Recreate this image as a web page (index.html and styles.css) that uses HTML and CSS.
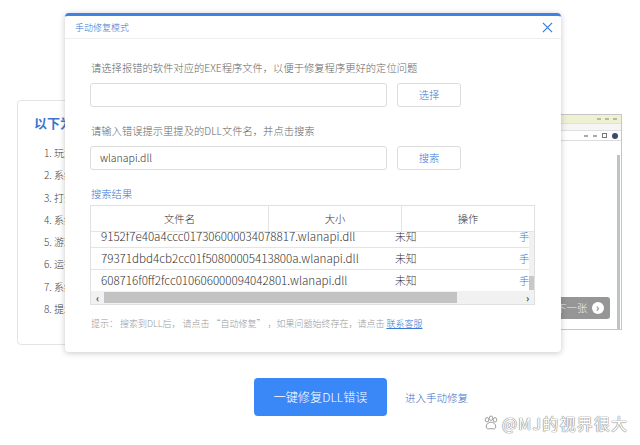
FILE: index.html
```html
<!DOCTYPE html>
<html lang="zh">
<head>
<meta charset="utf-8">
<link rel="stylesheet" href="styles.css">
</head>
<body>
<div class="page">
  <div class="stage">
    <div class="card">
      <h2 class="card-title">以下为常见的DLL报错原因</h2>
      <ol class="reasons">
        <li>1. 玩游戏或运行软件时提示找不到DLL文件</li>
        <li>2. 系统文件被误删除或损坏</li>
        <li>3. 打开程序提示缺少DLL文件</li>
        <li>4. 系统更新后DLL文件丢失</li>
        <li>5. 游戏运行库安装不完整</li>
        <li>6. 运行软件提示应用程序无法正常启动</li>
        <li>7. 系统中毒导致DLL文件被破坏</li>
        <li>8. 提示DLL文件版本不兼容</li>
      </ol>
    </div>
    <div class="shot">
      <div class="shot-title"><span class="wbtn"></span><span class="wbtn"></span><span class="wbtn"></span></div>
      <div class="shot-menu"></div>
      <div class="shot-tools"><span class="ti"></span><span class="ti"></span><span class="ti sq"></span><span class="ti dot"></span></div>
      <div class="shot-body"><div class="shot-scroll"></div></div>
      <div class="next">下一张 <span class="next-ico">›</span></div>
    </div>
  </div>

  <div class="actions">
    <button class="primary">一键修复DLL错误</button>
    <a class="manual">进入手动修复</a>
  </div>

  <div class="watermark">
    <svg class="paw" viewBox="0 0 20 20" width="16" height="16"><g fill="#fff" stroke="#9a9a9a" stroke-width="1.2"><ellipse cx="5" cy="6" rx="2.2" ry="2.8"/><ellipse cx="10" cy="4" rx="2.2" ry="2.8"/><ellipse cx="15" cy="6" rx="2.2" ry="2.8"/><path d="M4 15c0-4 3-6 6-6s6 2 6 6c0 2-2 3-6 2-4 1-6 0-6-2z"/></g></svg>
    <span>@MJ的视界很大</span>
  </div>

  <div class="modal">
    <div class="modal-head">
      <span class="modal-title">手动修复模式</span>
      <svg class="close" viewBox="0 0 12 12" width="11" height="11"><path d="M1 1L11 11M11 1L1 11" stroke="#3a7bd5" stroke-width="1.3" fill="none"/></svg>
    </div>
    <div class="modal-body">
      <p class="label">请选择报错的软件对应的EXE程序文件，以便于修复程序更好的定位问题</p>
      <div class="field-row">
        <div class="input"></div>
        <div class="btn">选择</div>
      </div>
      <p class="label gap">请输入错误提示里提及的DLL文件名，并点击搜索</p>
      <div class="field-row">
        <div class="input">wlanapi.dll</div>
        <div class="btn">搜索</div>
      </div>
      <p class="result-title">搜索结果</p>
      <div class="table">
        <div class="thead">
          <div class="th c1">文件名</div>
          <div class="th c2">大小</div>
          <div class="th c3">操作</div>
        </div>
        <div class="tbody">
          <div class="rows">
            <div class="tr"><span class="td n">9152f7e40a4ccc017306000034078817.wlanapi.dll</span><span class="td s">未知</span><span class="td a">手动</span></div>
            <div class="tr"><span class="td n">79371dbd4cb2cc01f50800005413800a.wlanapi.dll</span><span class="td s">未知</span><span class="td a">手动</span></div>
            <div class="tr"><span class="td n">608716f0ff2fcc010606000094042801.wlanapi.dll</span><span class="td s">未知</span><span class="td a">手动</span></div>
          </div>
          <div class="vscroll"><div class="vthumb"></div></div>
        </div>
        <div class="hscroll">
          <span class="arr">‹</span>
          <div class="htrack"><div class="hthumb"></div></div>
          <span class="arr">›</span>
        </div>
      </div>
      <p class="hint">提示： 搜索到DLL后， 请点击 “自动修复” ，如果问题始终存在，请点击 <a class="link">联系客服</a></p>
    </div>
  </div>
</div>
</body>
</html>
```

FILE: styles.css
```css
* { box-sizing: border-box; }
html, body { margin: 0; padding: 0; }
body {
  width: 640px;
  height: 445px;
  overflow: hidden;
  background: #fff;
  font-family: "Noto Sans CJK SC", "Noto Sans", sans-serif;
  font-weight: 300;
  color: #333;
}
.page { position: relative; width: 640px; height: 445px; }

.stage {
  display: flex;
  align-items: flex-start;
  padding: 100px 0 0 17px;
}
.card {
  width: 544px;
  height: 245px;
  border: 1px solid #e4e4e4;
  border-radius: 4px;
  padding: 12px 0 0 16px;
  flex-shrink: 0;
}
.card-title {
  margin: 0;
  font-size: 13px;
  line-height: 20px;
  font-weight: bold;
  color: #3b74cf;
  white-space: nowrap;
}
.reasons {
  list-style: none;
  margin: 9px 0 0 10px;
  padding: 0;
  font-size: 10px;
  color: #444;
}
.reasons li { line-height: 22.3px; white-space: nowrap; }

.shot {
  position: relative;
  margin: 14px 0 0 -140px;
  width: 201px;
  height: 216px;
  border: 1px solid #c6c6c6;
  background: #fff;
  flex-shrink: 0;
  display: flex;
  flex-direction: column;
}
.shot-title {
  height: 8px;
  background: #eef1d2;
  display: flex;
  justify-content: flex-end;
  align-items: center;
  gap: 4px;
  padding-right: 4px;
}
.wbtn { width: 4px; height: 2px; background: #b9bba5; }
.shot-menu { height: 8px; border-top: 1px solid #e0e0e0; border-bottom: 1px solid #e0e0e0; background: #f5f5f5; }
.shot-tools {
  height: 10px;
  display: flex;
  justify-content: flex-end;
  align-items: center;
  gap: 5px;
  padding-right: 3px;
  border-bottom: 1px solid #ddd;
}
.ti { width: 4px; height: 2px; background: #aaa; }
.ti.sq { width: 5px; height: 5px; background: none; border: 1px solid #777; }
.ti.dot { width: 6px; height: 6px; border-radius: 50%; background: #3c4a6b; }
.shot-body { flex: 1; position: relative; }
.shot-scroll { position: absolute; right: 1px; top: 14px; bottom: 0; width: 3px; background: #bcc4c4; }
.next {
  position: absolute;
  left: 122px;
  top: 182px;
  width: 66px;
  height: 22px;
  border-radius: 3px;
  background: rgba(120,120,120,0.78);
  color: #eee;
  font-size: 10.5px;
  line-height: 22px;
  padding-left: 12px;
  display: flex;
  align-items: center;
  gap: 4px;
}
.next-ico {
  width: 12px; height: 12px; border-radius: 50%;
  background: #fff; color: #888; font-size: 11px; line-height: 11px;
  display: inline-flex; justify-content: center; font-weight: bold;
}

.actions {
  display: flex;
  align-items: center;
  gap: 18px;
  padding-left: 254px;
  margin-top: 33px;
}
.primary {
  width: 133px;
  height: 38px;
  border: none;
  border-radius: 4px;
  background: #3a87f7;
  color: #fff;
  font-family: inherit;
  font-weight: 300;
  font-size: 12.2px;
}
.manual { color: #3a6fc8; font-size: 10.5px; }

.watermark {
  position: absolute;
  left: 483px;
  top: 411px;
  display: flex;
  align-items: center;
  gap: 3px;
  font-size: 16px;
  font-weight: 400;
  color: #fff;
  letter-spacing: 1.2px;
  text-shadow: 0 0 1px #888, 0 0 1px #888, 0 0 1px #888;
}

.modal {
  position: absolute;
  left: 65px;
  top: 13px;
  width: 496px;
  height: 339px;
  background: #fff;
  border-top: 3px solid #3f82e2;
  border-radius: 4px;
  box-shadow: 0 1px 6px rgba(0,0,0,0.22);
}
.modal-head {
  height: 23px;
  border-bottom: 1px solid #eeeeee;
  display: flex;
  align-items: center;
  justify-content: space-between;
  padding: 0 8px 0 10px;
}
.modal-title { font-size: 9px; color: #3a78d4; }
.modal-body { padding: 0 0 0 25px; }
.label {
  margin: 22px 0 0 1px;
  font-size: 10.3px;
  line-height: 14px;
  color: #666;
}
.label.gap { margin-top: 17px; }
.field-row { display: flex; gap: 10px; margin-top: 8px; }
.input {
  width: 297px;
  height: 24px;
  border: 1px solid #dcdcdc;
  border-radius: 3px;
  font-size: 10.5px;
  line-height: 22px;
  padding-left: 9px;
  color: #333;
}
.btn {
  width: 64px;
  height: 24px;
  border: 1px solid #dcdcdc;
  border-radius: 3px;
  text-align: center;
  font-size: 10.3px;
  line-height: 22px;
  color: #3a78d4;
}
.result-title {
  margin: 17px 0 0 1px;
  font-size: 10.3px;
  line-height: 14px;
  color: #3a78d4;
}
.table {
  margin-top: 4px;
  width: 445px;
  border: 1px solid #e0e0e0;
  font-size: 10.3px;
}
.thead { display: flex; height: 26px; border-bottom: 1px solid #e4e4e4; }
.th { text-align: center; line-height: 25px; color: #333; }
.c1 { width: 178px; border-right: 1px solid #e4e4e4; }
.c2 { width: 133px; border-right: 1px solid #e4e4e4; }
.c3 { flex: 1; }
.tbody { position: relative; height: 59px; overflow: hidden; }
.rows { margin-top: -6px; }
.tr { display: flex; height: 22px; line-height: 21px; border-bottom: 1px solid #e4e4e4; white-space: nowrap; }
.td { overflow: hidden; }
.td.n { width: 294px; padding-left: 10px; color: #333; font-size: 11.6px; }
.td.s { width: 134px; padding-left: 10px; color: #333; font-size: 10.8px; }
.td.a { width: 10px; color: #3a78d4; }
.vscroll { position: absolute; right: 0; top: 0; bottom: 0; width: 5px; background: #f1f1f1; }
.vthumb { position: absolute; left: 0; right: 0; top: 44px; height: 14px; background: #c8c8c8; }
.hscroll { display: flex; align-items: center; height: 13px; background: #f1f1f1; }
.arr { width: 13px; text-align: center; font-size: 10px; line-height: 12px; color: #444; font-weight: bold; }
.htrack { flex: 1; height: 11px; position: relative; }
.hthumb { position: absolute; left: 0; top: 0; bottom: 0; width: 353px; background: #c3c3c3; }
.hint {
  margin: 12px 0 0 1px;
  font-size: 9px;
  line-height: 14px;
  color: #999;
  white-space: nowrap;
}
.link { color: #3a78d4; text-decoration: underline; }
```
